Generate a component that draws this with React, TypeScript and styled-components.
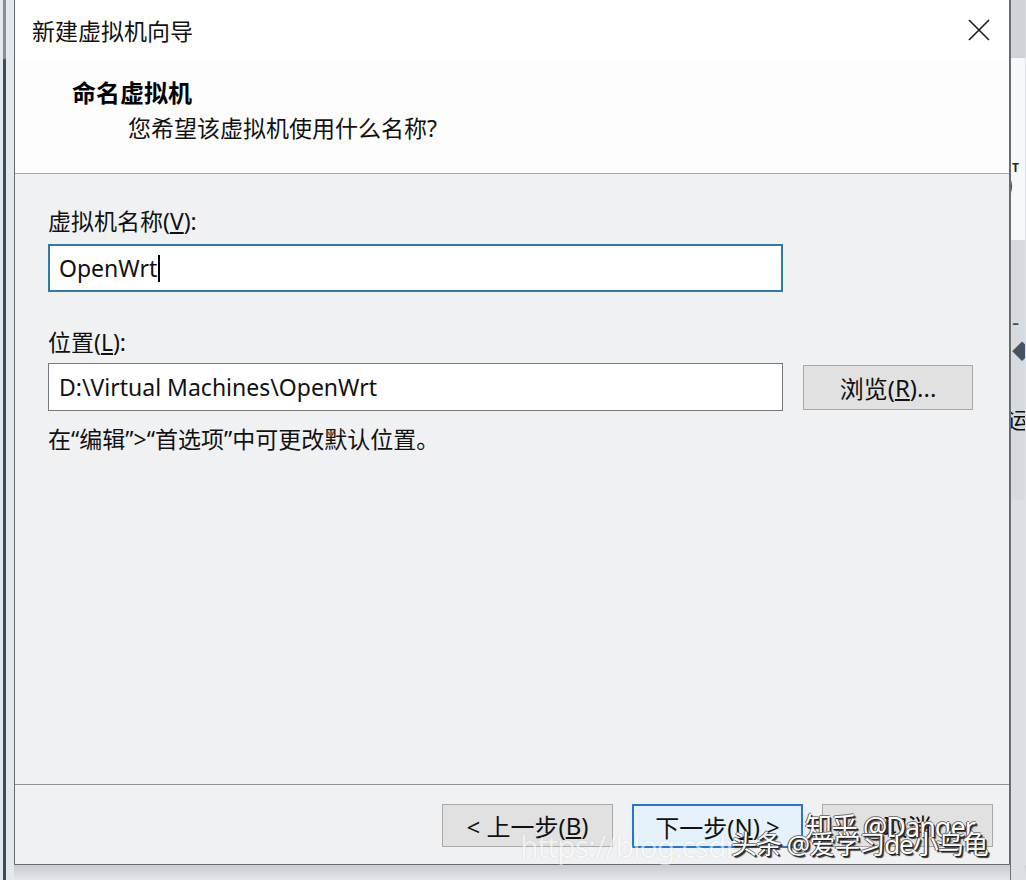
import styled, { createGlobalStyle } from "styled-components";

const GlobalStyle = createGlobalStyle`
  html, body {
    margin: 0;
    padding: 0;
    width: 1026px;
    height: 880px;
    overflow: hidden;
    background: #dde1e6;
  }
  * {
    box-sizing: border-box;
  }
`;

const font = `"Noto Sans", "Noto Sans CJK SC", sans-serif`;

const Desktop = styled.div`
  display: flex;
  width: 1026px;
  height: 880px;
  font-family: ${font};
  color: #111;
  background: linear-gradient(to bottom, #dde1e6 0, #dde1e6 864px, #c9ccd0 866px, #e4e6e9 880px);
`;

const LeftEdge = styled.div`
  width: 14px;
  flex: none;
  display: flex;
  padding-left: 3px;
  background: #e3e8ee;
`;

const EdgeLine = styled.div`
  width: 3px;
  height: 100%;
  background: linear-gradient(to bottom, #8a8f96 0, #8a8f96 58px, #3c4b5e 60px, #3c4b5e 100%);
`;

const RightEdge = styled.div`
  width: 15px;
  flex: none;
  display: flex;
  flex-direction: column;
  background: #dfe2e6;
  border-left: 1px solid #6c6f74;
  overflow: hidden;
`;

const EdgeBlock = styled.div<{ $h: number; $bg: string }>`
  height: ${(p) => p.$h}px;
  flex: none;
  background: ${(p) => p.$bg};
  position: relative;
  overflow: hidden;
  font-size: 22px;
  line-height: 1;
`;

const EdgeMark = styled.span<{ $top: number }>`
  position: absolute;
  left: 1px;
  top: ${(p) => p.$top}px;
  color: #1b2a44;
  font-weight: 700;
`;

const Window = styled.div`
  position: relative;
  z-index: 1;
  width: 996px;
  height: 865px;
  flex: none;
  display: flex;
  flex-direction: column;
  border: 1px solid #67696c;
  border-top: none;
  background: #f0f1f3;
`;

const TitleBar = styled.div`
  height: 60px;
  flex: none;
  display: flex;
  align-items: center;
  justify-content: space-between;
  padding: 0 18px 0 17px;
  background: #ffffff;
  font-size: 23px;
`;

const CloseButton = styled.div`
  width: 24px;
  height: 24px;
  display: flex;
  align-items: center;
  justify-content: center;
`;

const Header = styled.div`
  flex: none;
  height: 114px;
  padding: 17px 0 0 57px;
  background: #fdfdfe;
  border-bottom: 1px solid #a3a5a8;
`;

const HeaderTitle = styled.div`
  font-size: 24px;
  font-weight: 700;
  line-height: 32px;
  color: #000;
`;

const HeaderSub = styled.div`
  font-size: 23px;
  line-height: 32px;
  margin-top: 3px;
  padding-left: 56px;
`;

const Body = styled.div`
  flex: 1;
  display: flex;
  flex-direction: column;
  padding: 31px 0 0 33px;
`;

const Label = styled.div<{ $gap?: number }>`
  font-size: 23px;
  line-height: 32px;
  margin-top: ${(p) => p.$gap ?? 0}px;
`;

const FieldRow = styled.div<{ $gap: number }>`
  display: flex;
  align-items: center;
  gap: 20px;
  margin-top: ${(p) => p.$gap}px;
`;

const TextBox = styled.div<{ $focused?: boolean }>`
  width: 735px;
  height: 48px;
  display: flex;
  align-items: center;
  padding-left: ${(p) => (p.$focused ? 9 : 10)}px;
  background: #ffffff;
  border: ${(p) => (p.$focused ? "2px solid #2f7aa6" : "1px solid #76797d")};
  font-size: 23px;
  color: #111;
`;

const Caret = styled.span`
  display: inline-block;
  width: 1.5px;
  height: 27px;
  background: #000;
  margin-left: 1px;
`;

const PushButton = styled.div<{ $default?: boolean; $w?: number }>`
  width: ${(p) => p.$w ?? 171}px;
  height: ${(p) => (p.$default ? 44 : 43)}px;
  display: flex;
  align-items: center;
  justify-content: center;
  background: ${(p) => (p.$default ? "#e5f1fb" : "#e1e1e1")};
  border: ${(p) => (p.$default ? "2px solid #1f78d1" : "1px solid #a9a9a9")};
  font-size: 24px;
  color: #111;
  white-space: pre;
`;

const Hint = styled.div`
  font-size: 23px;
  line-height: 32px;
  margin-top: 12px;
`;

const Footer = styled.div`
  flex: none;
  height: 80px;
  display: flex;
  justify-content: flex-end;
  gap: 19px;
  padding: 19px 16px 0 0;
  border-top: 1px solid #8f9194;
`;

const Watermark = styled.div<{ $x: number; $y: number; $size: number; $faint?: boolean }>`
  position: absolute;
  left: ${(p) => p.$x}px;
  top: ${(p) => p.$y}px;
  font-size: ${(p) => p.$size}px;
  line-height: 1;
  letter-spacing: -1px;
  white-space: nowrap;
  color: #ffffff;
  opacity: ${(p) => (p.$faint ? 0.55 : 1)};
  text-shadow: ${(p) =>
    p.$faint
      ? "0 0 1px #9aa0a6"
      : "1px 1px 0 #222, -1px 0 0 #555, 0 -1px 0 #777, 2px 2px 1px #333"};
  pointer-events: none;
`;

export default function App() {
  return (
    <>
      <GlobalStyle />
      <Desktop>
        <LeftEdge>
          <EdgeLine />
        </LeftEdge>
        <Window>
          <TitleBar>
            <span>新建虚拟机向导</span>
            <CloseButton>
              <svg width="22" height="22" viewBox="0 0 22 22">
                <path d="M1 1 L21 21 M21 1 L1 21" stroke="#1a1a1a" strokeWidth="1.6" />
              </svg>
            </CloseButton>
          </TitleBar>
          <Header>
            <HeaderTitle>命名虚拟机</HeaderTitle>
            <HeaderSub>您希望该虚拟机使用什么名称?</HeaderSub>
          </Header>
          <Body>
            <Label>
              虚拟机名称(<u>V</u>):
            </Label>
            <FieldRow $gap={7}>
              <TextBox $focused>
                OpenWrt
                <Caret />
              </TextBox>
            </FieldRow>
            <Label $gap={34}>
              位置(<u>L</u>):
            </Label>
            <FieldRow $gap={5}>
              <TextBox>D:\Virtual Machines\OpenWrt</TextBox>
              <PushButton $w={170} style={{ height: 45 }}>
                浏览(<u>R</u>)...
              </PushButton>
            </FieldRow>
            <Hint>在“编辑”&gt;“首选项”中可更改默认位置。</Hint>
          </Body>
          <Footer>
            <PushButton>
              {"< 上一步("}
              <u>B</u>
              {")"}
            </PushButton>
            <PushButton $default>
              {"下一步("}
              <u>N</u>
              {") >"}
            </PushButton>
            <PushButton>取消</PushButton>
          </Footer>
          <Watermark $x={505} $y={832} $size={30} $faint>
            https://blog.csdn
          </Watermark>
          <Watermark $x={790} $y={813} $size={27}>
            知乎 @Danger
          </Watermark>
          <Watermark $x={716} $y={831} $size={26}>
            头条 @爱学习de小乌龟
          </Watermark>
        </Window>
        <RightEdge>
          <EdgeBlock $h={58} $bg="#cfd3d8" />
          <EdgeBlock $h={182} $bg="#f7f8fa">
            <EdgeMark $top={104} style={{ fontSize: 12 }}>T</EdgeMark>
            <EdgeMark $top={112} style={{ left: -6, fontSize: 26, fontWeight: 400 }}>)</EdgeMark>
          </EdgeBlock>
          <EdgeBlock $h={260} $bg="#d7dade">
            <EdgeMark $top={70} style={{ fontWeight: 400, color: "#3a4a5e" }}>-</EdgeMark>
            <EdgeMark $top={102} style={{ color: "#435468", fontSize: 20 }}>◆</EdgeMark>
            <EdgeMark $top={168} style={{ left: -4, fontWeight: 400, color: "#111" }}>运</EdgeMark>
          </EdgeBlock>
          <EdgeBlock $h={380} $bg="#dcdfe3" />
        </RightEdge>
      </Desktop>
    </>
  );
}
